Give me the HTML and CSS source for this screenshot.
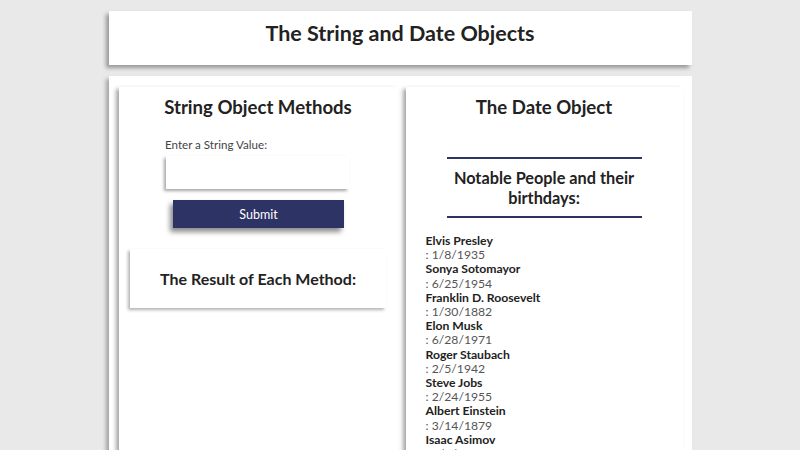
FILE: index.html
```html
<!DOCTYPE html>
<html lang="en">
<head>
<meta charset="utf-8">
<title>The String and Date Objects</title>
<link rel="stylesheet" href="styles.css">
</head>
<body>
<header class="page-header">
  <h1 class="page-title">The String and Date Objects</h1>
</header>
<main class="page-main">
  <section class="col col-left">
    <h2 class="col-title">String Object Methods</h2>
    <form class="string-form">
      <label class="field-label" for="strval">Enter a String Value:</label>
      <input class="field-input" id="strval" type="text">
      <button class="submit-btn" type="button">Submit</button>
    </form>
    <div class="result-card">
      <h3 class="result-title">The Result of Each Method:</h3>
    </div>
  </section>
  <section class="col col-right">
    <h2 class="col-title">The Date Object</h2>
    <div class="people-head">
      <h3 class="people-title">Notable People and their birthdays:</h3>
    </div>
    <ul class="people-list">
      <li><span class="person">Elvis Presley</span><span class="bday">: 1/8/1935</span></li>
      <li><span class="person">Sonya Sotomayor</span><span class="bday">: 6/25/1954</span></li>
      <li><span class="person">Franklin D. Roosevelt</span><span class="bday">: 1/30/1882</span></li>
      <li><span class="person">Elon Musk</span><span class="bday">: 6/28/1971</span></li>
      <li><span class="person">Roger Staubach</span><span class="bday">: 2/5/1942</span></li>
      <li><span class="person">Steve Jobs</span><span class="bday">: 2/24/1955</span></li>
      <li><span class="person">Albert Einstein</span><span class="bday">: 3/14/1879</span></li>
      <li><span class="person">Isaac Asimov</span><span class="bday">: 1/2/1920</span></li>
    </ul>
  </section>
</main>
</body>
</html>
```

FILE: styles.css
```css
html, body {
  margin: 0;
  padding: 0;
}
body {
  background: #e9e9e9;
  font-family: "Lato", "Open Sans", sans-serif;
  color: #222;
  padding-top: 11px;
  height: 450px;
  box-sizing: border-box;
  overflow: hidden;
}
.page-header {
  width: 583px;
  height: 54px;
  box-sizing: border-box;
  padding-bottom: 10px;
  margin: 0 auto;
  background: #fff;
  box-shadow: -3px 3px 4px rgba(0, 0, 0, 0.35);
  display: flex;
  align-items: center;
  justify-content: center;
}
.page-title {
  margin: 0;
  font-size: 21.5px;
  font-weight: 700;
  color: #222;
}
.page-main {
  width: 583px;
  margin: 11px auto 0;
  background: #fff;
  box-shadow: -3px 3px 4px rgba(0, 0, 0, 0.3);
  box-sizing: border-box;
  padding: 11px 9px 0 10px;
  display: flex;
  gap: 8px;
  min-height: 400px;
}
.col {
  background: #fff;
  box-shadow: -3px 2px 4px rgba(0, 0, 0, 0.35);
  min-height: 380px;
  display: flex;
  flex-direction: column;
  align-items: center;
}
.col-left { width: 279px; }
.col-right { width: 277px; }
.col-title {
  margin: 8px 0 0;
  font-size: 18.6px;
  font-weight: 700;
  line-height: 24px;
}
.string-form {
  display: flex;
  flex-direction: column;
  align-items: flex-start;
  width: 184px;
  margin-top: 19px;
}
.field-label {
  font-size: 11.6px;
  color: #444;
  line-height: 14px;
  margin-left: -1px;
}
.field-input {
  margin-top: 4px;
  width: 183px;
  height: 33px;
  box-sizing: border-box;
  border: none;
  background: #fff;
  box-shadow: -2px 2px 3px rgba(0, 0, 0, 0.35);
  outline: none;
}
.submit-btn {
  margin: 11px 0 0 7px;
  width: 171px;
  height: 28px;
  border: none;
  background: #2e3366;
  color: #fff;
  font-family: "Lato", sans-serif;
  font-size: 12.5px;
  box-shadow: -3px 4px 5px rgba(0, 0, 0, 0.45);
}
.result-card {
  margin-top: 21px;
  width: 256px;
  height: 59px;
  box-shadow: -2px 2px 3px rgba(0, 0, 0, 0.3);
  display: flex;
  align-items: center;
  justify-content: center;
}
.result-title {
  margin: 0;
  font-size: 16px;
  font-weight: 700;
}
.people-head {
  margin-top: 38px;
  width: 195px;
  border-top: 2px solid #2e3366;
  border-bottom: 2px solid #2e3366;
  padding: 9px 0 9px;
  text-align: center;
}
.people-title {
  margin: 0;
  font-size: 16.3px;
  font-weight: 700;
  line-height: 19.5px;
}
.people-list {
  list-style: none;
  margin: 16px 0 0;
  padding: 0 0 0 20px;
  align-self: stretch;
  font-size: 12.2px;
  line-height: 14.2px;
}
.people-list li {
  display: flex;
  flex-direction: column;
}
.person {
  font-weight: 700;
  color: #222;
}
.bday {
  color: #555;
}
```
